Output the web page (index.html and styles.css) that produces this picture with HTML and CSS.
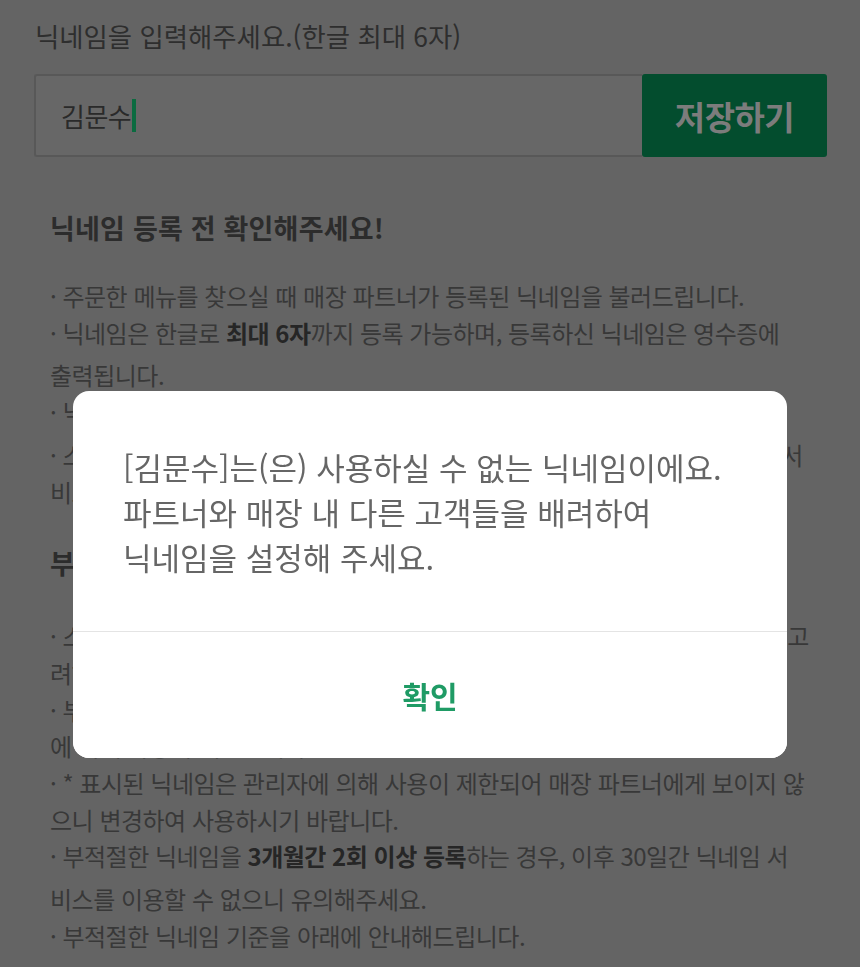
FILE: index.html
```html
<!DOCTYPE html>
<html lang="ko">
<head>
<meta charset="utf-8">
<title>닉네임 설정</title>
<link rel="stylesheet" href="styles.css">
</head>
<body>
<main class="page">
  <h1 class="field-label">닉네임을 입력해주세요.(한글 최대 6자)</h1>
  <div class="input-row">
    <div class="nick-input"><span class="nick-value">김문수</span><span class="caret"></span></div>
    <button class="save-btn" type="button">저장하기</button>
  </div>
  <section class="notice">
    <h2 class="notice-title">닉네임 등록 전 확인해주세요!</h2>
    <div class="notice-list">
      <p>· 주문한 메뉴를 찾으실 때 매장 파트너가 등록된 닉네임을 불러드립니다.</p>
      <p>· 닉네임은 한글로 <strong>최대 6자</strong>까지 등록 가능하며, 등록하신 닉네임은 영수증에<br>출력됩니다.</p>
      <p>· 닉네임은 <strong>등록 후 언제든지</strong> 변경하실 수 있습니다.</p>
      <p>· 스타벅스 사이렌 오더로 주문하신 경우에만 파트너가 닉네임을 불러드리는 서<br>비스입니다.</p>
    </div>
    <h2 class="notice-title second">부적절한 닉네임 안내</h2>
    <div class="notice-list">
      <p>· 스타벅스 파트너와 매장의 다른 고객들을 생각하여 바람직한 닉네임 등록을 고<br>려해 주세요.</p>
      <p>· 부적절한 닉네임으로 판단되는 경우에 별도의 안내 없이 * 표시되며 관리자<br>에 의해 사용이 제한됩니다.</p>
      <p>· * 표시된 닉네임은 관리자에 의해 사용이 제한되어 매장 파트너에게 보이지 않<br>으니 변경하여 사용하시기 바랍니다.</p>
      <p>· 부적절한 닉네임을 <strong>3개월간 2회 이상 등록</strong>하는 경우, 이후 30일간 닉네임 서<br>비스를 이용할 수 없으니 유의해주세요.</p>
      <p>· 부적절한 닉네임 기준을 아래에 안내해드립니다.</p>
    </div>
  </section>
</main>

<div class="dim-layer">
  <div class="dialog" role="alertdialog">
    <p class="dialog-msg">[김문수]는(은) 사용하실 수 없는 닉네임이에요.<br>파트너와 매장 내 다른 고객들을 배려하여<br>닉네임을 설정해 주세요.</p>
    <button class="dialog-ok" type="button">확인</button>
  </div>
</div>
</body>
</html>
```

FILE: styles.css
```css
* {
  box-sizing: border-box;
}

html, body {
  margin: 0;
  padding: 0;
  height: 100%;
  overflow: hidden;
}

body {
  background: #646464;
  font-family: "Noto Sans CJK KR", "Noto Sans", sans-serif;
  color: #383838;
}

.page {
  padding: 16px 33px 0 34px;
}

.field-label {
  margin: 0;
  font-size: 26.4px;
  line-height: 40px;
  font-weight: 400;
  color: #2e2e2e;
  padding-left: 1px;
}

.input-row {
  display: flex;
  margin-top: 18px;
  height: 83px;
}

.nick-input {
  flex: 1;
  display: flex;
  align-items: center;
  padding-left: 25px;
  background: #676767;
  border: 2px solid #585858;
  border-right: none;
  border-radius: 3px 0 0 3px;
}

.nick-value {
  font-size: 26px;
  color: #2a2a2a;
  line-height: 1;
  letter-spacing: -0.5px;
}

.caret {
  display: inline-block;
  width: 4px;
  height: 33px;
  margin-left: 1px;
  background: #0b6b40;
}

.save-btn {
  width: 185px;
  border: none;
  border-radius: 3px;
  background: #034d2e;
  color: #7c7c7c;
  font-family: inherit;
  font-size: 33px;
  font-weight: 700;
  letter-spacing: -0.5px;
  padding: 0;
}

.notice {
  padding: 0 16px;
  margin-top: 51px;
}

.notice-title {
  margin: 0 0 30px;
  font-size: 27px;
  line-height: 40px;
  font-weight: 700;
  color: #2c2c2c;
  letter-spacing: 0.2px;
}

.notice-title.second {
  margin-top: 33px;
  margin-bottom: 35px;
}

.notice-list p {
  margin: 0;
  font-size: 24px;
  line-height: 36.7px;
  letter-spacing: -0.5px;
  white-space: nowrap;
  color: #383838;
}

.notice-list strong {
  display: inline-block;
  padding-bottom: 6px;
  font-weight: 700;
  color: #262626;
}

.dim-layer {
  position: fixed;
  inset: 0;
  display: flex;
  justify-content: center;
  align-items: flex-start;
  padding-top: 391px;
}

.dialog {
  width: 714px;
  background: #ffffff;
  border-radius: 16px;
  overflow: hidden;
}

.dialog-msg {
  margin: 0;
  padding: 53px 20px 52px 50px;
  font-size: 31px;
  line-height: 45px;
  color: #666666;
  white-space: nowrap;
}

.dialog-ok {
  display: block;
  width: 100%;
  height: 127px;
  border: none;
  border-top: 1px solid #e4e4e4;
  background: #ffffff;
  color: #1f9b65;
  font-family: inherit;
  font-size: 30px;
  font-weight: 700;
  padding: 0;
}
```
